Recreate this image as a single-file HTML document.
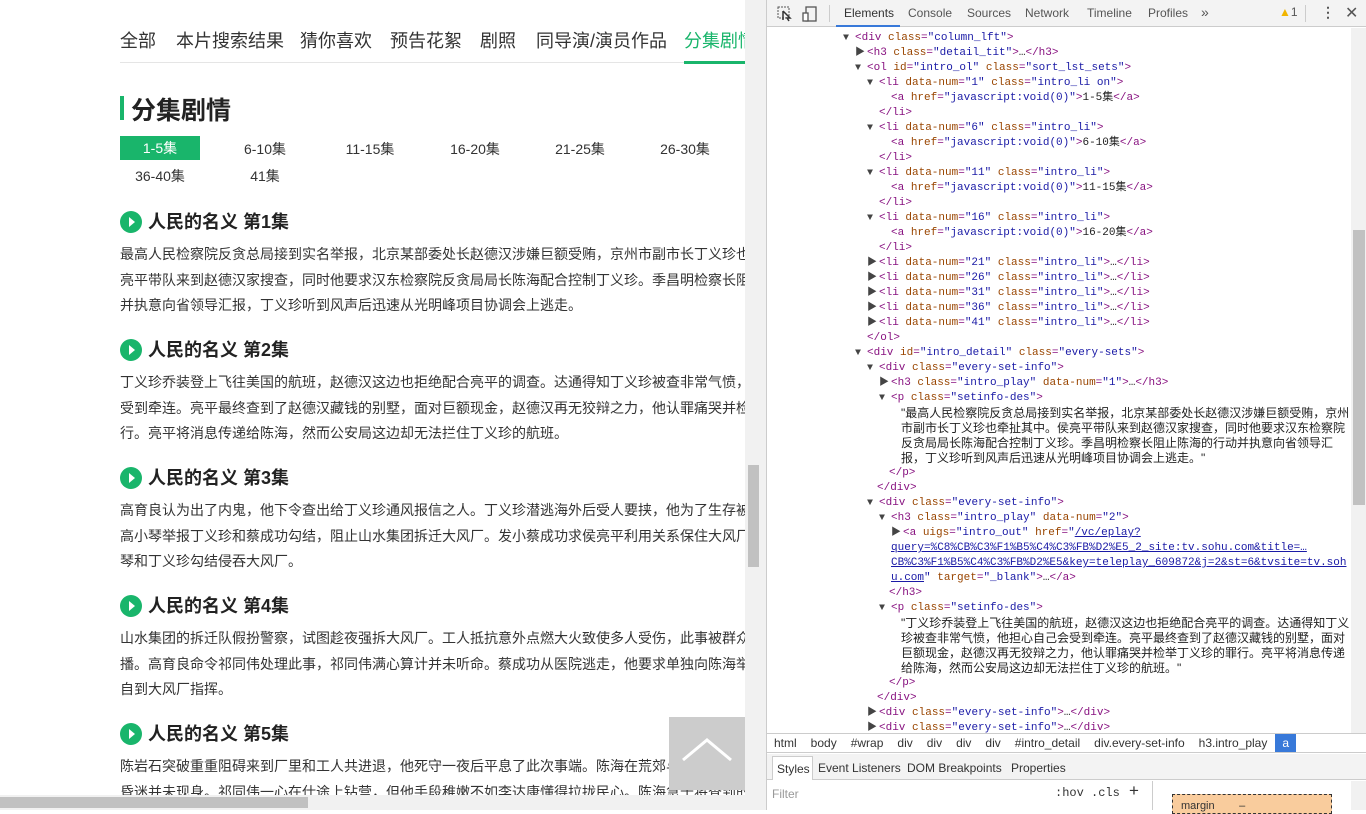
<!DOCTYPE html>
<html><head><meta charset="utf-8"><style>
*{margin:0;padding:0;box-sizing:border-box}
body{width:1366px;height:810px;overflow:hidden;background:#fff;font-family:"Liberation Sans","Noto Sans CJK SC",sans-serif;position:relative}
.a{position:absolute}
.nav span{position:absolute;top:27px;font-size:18px;color:#333;white-space:nowrap}
.ep{position:absolute;font-size:14px;color:#333;width:80px;text-align:center;height:24px;line-height:24px}
.h{position:absolute;left:120px;font-size:18px;font-weight:bold;color:#222;height:24px;line-height:24px;white-space:nowrap}
.h i{display:inline-block;width:22px;height:22px;border-radius:50%;background:#19b56b;vertical-align:-5px;margin-right:6px;position:relative}
.h i:after{content:"";position:absolute;left:9px;top:6px;border-left:6px solid #fff;border-top:5px solid transparent;border-bottom:5px solid transparent}
.p{position:absolute;left:120px;width:640px;font-size:14px;color:#333;line-height:25.5px;white-space:nowrap;overflow:hidden}
#dt{position:absolute;left:766px;top:0;width:600px;height:810px;background:#fff;border-left:1px solid #ccc;font-family:"Liberation Sans","Noto Sans CJK SC",sans-serif}
.code{position:absolute;left:0;top:31px;width:584px;font-family:"Liberation Mono","Noto Sans CJK SC",monospace;font-size:11px;line-height:15px;color:#222}
.code div{white-space:nowrap;height:15px;overflow:visible}
.t{color:#881280}.n{color:#994500}.v{color:#1a1aa6}.g{color:#a48}
.tri{color:#444;font-size:10px;display:inline-block;width:12px}
.cj{font-family:"Liberation Sans","Noto Sans CJK SC",sans-serif;font-size:12px;line-height:15px}
.u{color:#1a1aa6;text-decoration:underline}
</style></head><body>
<div class="nav">
<span style="left:120px">全部</span>
<span style="left:176px">本片搜索结果</span>
<span style="left:300px">猜你喜欢</span>
<span style="left:390px">预告花絮</span>
<span style="left:480px">剧照</span>
<span style="left:536px">同导演/演员作品</span>
<span style="left:684px;color:#19b56b">分集剧情</span>
</div>
<div class="a" style="left:120px;top:62px;width:625px;height:1px;background:#e5e5e5"></div>
<div class="a" style="left:684px;top:61px;width:61px;height:3px;background:#19b56b"></div>
<div class="a" style="left:120px;top:96px;width:4px;height:24px;background:#19b56b"></div>
<div class="a" style="left:131px;top:91px;font-size:25px;font-weight:bold;color:#222">分集剧情</div>
<div class="ep" style="left:120px;top:136px;background:#19b56b;color:#fff">1-5集</div>
<div class="ep" style="left:225px;top:137px">6-10集</div>
<div class="ep" style="left:330px;top:137px">11-15集</div>
<div class="ep" style="left:435px;top:137px">16-20集</div>
<div class="ep" style="left:540px;top:137px">21-25集</div>
<div class="ep" style="left:645px;top:137px">26-30集</div>
<div class="ep" style="left:120px;top:164px">36-40集</div>
<div class="ep" style="left:225px;top:164px">41集</div>

<div class="h" style="top:210px"><i></i>人民的名义 第1集</div>
<div class="p" style="top:242px;width:625px">最高人民检察院反贪总局接到实名举报，北京某部委处长赵德汉涉嫌巨额受贿，京州市副市长丁义珍也牵扯其中。<br>亮平带队来到赵德汉家搜查，同时他要求汉东检察院反贪局局长陈海配合控制丁义珍。季昌明检察长阻止陈海的行动<br>并执意向省领导汇报，丁义珍听到风声后迅速从光明峰项目协调会上逃走。</div>
<div class="h" style="top:338px"><i></i>人民的名义 第2集</div>
<div class="p" style="top:370px;width:625px">丁义珍乔装登上飞往美国的航班，赵德汉这边也拒绝配合亮平的调查。达通得知丁义珍被查非常气愤，他担心自己会<br>受到牵连。亮平最终查到了赵德汉藏钱的别墅，面对巨额现金，赵德汉再无狡辩之力，他认罪痛哭并检举丁义珍的罪<br>行。亮平将消息传递给陈海，然而公安局这边却无法拦住丁义珍的航班。</div>
<div class="h" style="top:466px"><i></i>人民的名义 第3集</div>
<div class="p" style="top:498px;width:625px">高育良认为出了内鬼，他下令查出给丁义珍通风报信之人。丁义珍潜逃海外后受人要挟，他为了生存被迫出卖情报。<br>高小琴举报丁义珍和蔡成功勾结，阻止山水集团拆迁大风厂。发小蔡成功求侯亮平利用关系保住大风厂，并举报高小<br>琴和丁义珍勾结侵吞大风厂。</div>
<div class="h" style="top:594px"><i></i>人民的名义 第4集</div>
<div class="p" style="top:626px;width:625px">山水集团的拆迁队假扮警察，试图趁夜强拆大风厂。工人抵抗意外点燃大火致使多人受伤，此事被群众拍下在网上传<br>播。高育良命令祁同伟处理此事，祁同伟满心算计并未听命。蔡成功从医院逃走，他要求单独向陈海举报，李达康亲<br>自到大风厂指挥。</div>
<div class="h" style="top:722px"><i></i>人民的名义 第5集</div>
<div class="p" style="top:754px;width:625px">陈岩石突破重重阻碍来到厂里和工人共进退，他死守一夜后平息了此次事端。陈海在荒郊与蔡成功接头，却遭遇车祸<br>昏迷并未现身。祁同伟一心在仕途上钻营，但他手段稚嫩不如李达康懂得拉拢民心。陈海急于将查到的</div>
<div class="a" style="left:669px;top:717px;width:76px;height:73px;background:#ccc"></div>
<svg class="a" style="left:677px;top:735px" width="60" height="30"><path d="M6 25 L30 5 L54 25" stroke="#fff" stroke-width="3" fill="none"/></svg>
<div class="a" style="left:745px;top:0;width:16px;height:795px;background:#f1f1f1"></div>
<div class="a" style="left:748px;top:465px;width:11px;height:102px;background:#c1c1c1"></div>
<div class="a" style="left:0;top:795px;width:761px;height:15px;background:#f1f1f1"></div>
<div class="a" style="left:0;top:797px;width:308px;height:11px;background:#c1c1c1"></div>
<div class="a" style="left:761px;top:0;width:5px;height:810px;background:#f1f1f1"></div>

<div id="dt">
<div class="a" style="left:0;top:0;width:600px;height:27px;background:#f3f3f3;border-bottom:1px solid #ccc"></div>
<svg class="a" style="left:10px;top:6px" width="44" height="16"><rect x="1" y="1" width="11" height="11" fill="none" stroke="#555" stroke-dasharray="2 1"/><path d="M6 5 L13 12 L10 12 L12 15 M6 5 L6 14" stroke="#333" stroke-width="1.5" fill="none"/><rect x="29" y="1" width="10" height="14" fill="none" stroke="#555" stroke-width="1.3"/><rect x="26" y="7" width="5" height="8" fill="#fff" stroke="#555" stroke-width="1.3"/></svg>
<div class="a" style="left:62px;top:5px;width:1px;height:17px;background:#ccc"></div>
<div class="a" style="top:6px;left:77px;font-size:12px;color:#333;white-space:nowrap">Elements</div>
<div class="a" style="left:69px;top:25px;width:64px;height:2px;background:#3879d9"></div>
<div class="a" style="top:6px;left:141px;font-size:12px;color:#555">Console</div>
<div class="a" style="top:6px;left:200px;font-size:12px;color:#555">Sources</div>
<div class="a" style="top:6px;left:258px;font-size:12px;color:#555">Network</div>
<div class="a" style="top:6px;left:320px;font-size:12px;color:#555">Timeline</div>
<div class="a" style="top:6px;left:381px;font-size:12px;color:#555">Profiles</div>
<div class="a" style="top:4px;left:434px;font-size:14px;color:#555">»</div>
<div class="a" style="top:5px;left:512px;font-size:12px;color:#555"><span style="color:#f1b500">▲</span>1</div>
<div class="a" style="left:538px;top:5px;width:1px;height:17px;background:#ccc"></div>
<div class="a" style="top:4px;left:554px;font-size:14px;color:#555;font-weight:bold">⋮</div>
<div class="a" style="top:3px;left:578px;font-size:16px;color:#555">✕</div>
<div class="a" style="left:584px;top:28px;width:16px;height:705px;background:#f1f1f1"></div>
<div class="a" style="left:586px;top:230px;width:12px;height:275px;background:#c1c1c1"></div>
<div class="code">
<div style="padding-left:76px"><span class="tri">▼</span><span class="t">&lt;div </span><span class="n">class</span><span class="t">=</span><span class="v">"column_lft"</span><span class="t">&gt;</span></div>
<div style="padding-left:88px"><span class="tri">▶</span><span class="t">&lt;h3 </span><span class="n">class</span><span class="t">=</span><span class="v">"detail_tit"</span><span class="t">&gt;</span>…<span class="t">&lt;/h3&gt;</span></div>
<div style="padding-left:88px"><span class="tri">▼</span><span class="t">&lt;ol </span><span class="n">id</span><span class="t">=</span><span class="v">"intro_ol"</span> <span class="n">class</span><span class="t">=</span><span class="v">"sort_lst_sets"</span><span class="t">&gt;</span></div>
<div style="padding-left:100px"><span class="tri">▼</span><span class="t">&lt;li </span><span class="n">data-num</span><span class="t">=</span><span class="v">"1"</span> <span class="n">class</span><span class="t">=</span><span class="v">"intro_li on"</span><span class="t">&gt;</span></div>
<div style="padding-left:124px"><span class="t">&lt;a </span><span class="n">href</span><span class="t">=</span><span class="v">"javascript:void(0)"</span><span class="t">&gt;</span>1-5集<span class="t">&lt;/a&gt;</span></div>
<div style="padding-left:112px"><span class="t">&lt;/li&gt;</span></div>
<div style="padding-left:100px"><span class="tri">▼</span><span class="t">&lt;li </span><span class="n">data-num</span><span class="t">=</span><span class="v">"6"</span> <span class="n">class</span><span class="t">=</span><span class="v">"intro_li"</span><span class="t">&gt;</span></div>
<div style="padding-left:124px"><span class="t">&lt;a </span><span class="n">href</span><span class="t">=</span><span class="v">"javascript:void(0)"</span><span class="t">&gt;</span>6-10集<span class="t">&lt;/a&gt;</span></div>
<div style="padding-left:112px"><span class="t">&lt;/li&gt;</span></div>
<div style="padding-left:100px"><span class="tri">▼</span><span class="t">&lt;li </span><span class="n">data-num</span><span class="t">=</span><span class="v">"11"</span> <span class="n">class</span><span class="t">=</span><span class="v">"intro_li"</span><span class="t">&gt;</span></div>
<div style="padding-left:124px"><span class="t">&lt;a </span><span class="n">href</span><span class="t">=</span><span class="v">"javascript:void(0)"</span><span class="t">&gt;</span>11-15集<span class="t">&lt;/a&gt;</span></div>
<div style="padding-left:112px"><span class="t">&lt;/li&gt;</span></div>
<div style="padding-left:100px"><span class="tri">▼</span><span class="t">&lt;li </span><span class="n">data-num</span><span class="t">=</span><span class="v">"16"</span> <span class="n">class</span><span class="t">=</span><span class="v">"intro_li"</span><span class="t">&gt;</span></div>
<div style="padding-left:124px"><span class="t">&lt;a </span><span class="n">href</span><span class="t">=</span><span class="v">"javascript:void(0)"</span><span class="t">&gt;</span>16-20集<span class="t">&lt;/a&gt;</span></div>
<div style="padding-left:112px"><span class="t">&lt;/li&gt;</span></div>
<div style="padding-left:100px"><span class="tri">▶</span><span class="t">&lt;li </span><span class="n">data-num</span><span class="t">=</span><span class="v">"21"</span> <span class="n">class</span><span class="t">=</span><span class="v">"intro_li"</span><span class="t">&gt;</span>…<span class="t">&lt;/li&gt;</span></div>
<div style="padding-left:100px"><span class="tri">▶</span><span class="t">&lt;li </span><span class="n">data-num</span><span class="t">=</span><span class="v">"26"</span> <span class="n">class</span><span class="t">=</span><span class="v">"intro_li"</span><span class="t">&gt;</span>…<span class="t">&lt;/li&gt;</span></div>
<div style="padding-left:100px"><span class="tri">▶</span><span class="t">&lt;li </span><span class="n">data-num</span><span class="t">=</span><span class="v">"31"</span> <span class="n">class</span><span class="t">=</span><span class="v">"intro_li"</span><span class="t">&gt;</span>…<span class="t">&lt;/li&gt;</span></div>
<div style="padding-left:100px"><span class="tri">▶</span><span class="t">&lt;li </span><span class="n">data-num</span><span class="t">=</span><span class="v">"36"</span> <span class="n">class</span><span class="t">=</span><span class="v">"intro_li"</span><span class="t">&gt;</span>…<span class="t">&lt;/li&gt;</span></div>
<div style="padding-left:100px"><span class="tri">▶</span><span class="t">&lt;li </span><span class="n">data-num</span><span class="t">=</span><span class="v">"41"</span> <span class="n">class</span><span class="t">=</span><span class="v">"intro_li"</span><span class="t">&gt;</span>…<span class="t">&lt;/li&gt;</span></div>
<div style="padding-left:100px"><span class="t">&lt;/ol&gt;</span></div>
<div style="padding-left:88px"><span class="tri">▼</span><span class="t">&lt;div </span><span class="n">id</span><span class="t">=</span><span class="v">"intro_detail"</span> <span class="n">class</span><span class="t">=</span><span class="v">"every-sets"</span><span class="t">&gt;</span></div>
<div style="padding-left:100px"><span class="tri">▼</span><span class="t">&lt;div </span><span class="n">class</span><span class="t">=</span><span class="v">"every-set-info"</span><span class="t">&gt;</span></div>
<div style="padding-left:112px"><span class="tri">▶</span><span class="t">&lt;h3 </span><span class="n">class</span><span class="t">=</span><span class="v">"intro_play"</span> <span class="n">data-num</span><span class="t">=</span><span class="v">"1"</span><span class="t">&gt;</span>…<span class="t">&lt;/h3&gt;</span></div>
<div style="padding-left:112px"><span class="tri">▼</span><span class="t">&lt;p </span><span class="n">class</span><span class="t">=</span><span class="v">"setinfo-des"</span><span class="t">&gt;</span></div>
<div class="cj" style="padding-left:134px;height:60px;white-space:normal;width:584px">"最高人民检察院反贪总局接到实名举报，北京某部委处长赵德汉涉嫌巨额受贿，京州市副市长丁义珍也牵扯其中。侯亮平带队来到赵德汉家搜查，同时他要求汉东检察院反贪局局长陈海配合控制丁义珍。季昌明检察长阻止陈海的行动并执意向省领导汇报，丁义珍听到风声后迅速从光明峰项目协调会上逃走。"</div>
<div style="padding-left:122px"><span class="t">&lt;/p&gt;</span></div>
<div style="padding-left:110px"><span class="t">&lt;/div&gt;</span></div>
<div style="padding-left:100px"><span class="tri">▼</span><span class="t">&lt;div </span><span class="n">class</span><span class="t">=</span><span class="v">"every-set-info"</span><span class="t">&gt;</span></div>
<div style="padding-left:112px"><span class="tri">▼</span><span class="t">&lt;h3 </span><span class="n">class</span><span class="t">=</span><span class="v">"intro_play"</span> <span class="n">data-num</span><span class="t">=</span><span class="v">"2"</span><span class="t">&gt;</span></div>
<div style="padding-left:124px"><span class="tri">▶</span><span class="t">&lt;a </span><span class="n">uigs</span><span class="t">=</span><span class="v">"intro_out"</span> <span class="n">href</span><span class="t">=</span><span class="v">"</span><span class="u">/vc/eplay?</span></div>
<div style="padding-left:124px"><span class="u">query=%C8%CB%C3%F1%B5%C4%C3%FB%D2%E5_2_site:tv.sohu.com&amp;title=…</span></div>
<div style="padding-left:124px"><span class="u">CB%C3%F1%B5%C4%C3%FB%D2%E5&amp;key=teleplay_609872&amp;j=2&amp;st=6&amp;tvsite=tv.soh</span></div>
<div style="padding-left:124px"><span class="u">u.com</span><span class="v">"</span> <span class="n">target</span><span class="t">=</span><span class="v">"_blank"</span><span class="t">&gt;</span>…<span class="t">&lt;/a&gt;</span></div>
<div style="padding-left:122px"><span class="t">&lt;/h3&gt;</span></div>
<div style="padding-left:112px"><span class="tri">▼</span><span class="t">&lt;p </span><span class="n">class</span><span class="t">=</span><span class="v">"setinfo-des"</span><span class="t">&gt;</span></div>
<div class="cj" style="padding-left:134px;height:60px;white-space:normal;width:584px">"丁义珍乔装登上飞往美国的航班，赵德汉这边也拒绝配合亮平的调查。达通得知丁义珍被查非常气愤，他担心自己会受到牵连。亮平最终查到了赵德汉藏钱的别墅，面对巨额现金，赵德汉再无狡辩之力，他认罪痛哭并检举丁义珍的罪行。亮平将消息传递给陈海，然而公安局这边却无法拦住丁义珍的航班。"</div>
<div style="padding-left:122px"><span class="t">&lt;/p&gt;</span></div>
<div style="padding-left:110px"><span class="t">&lt;/div&gt;</span></div>
<div style="padding-left:100px"><span class="tri">▶</span><span class="t">&lt;div </span><span class="n">class</span><span class="t">=</span><span class="v">"every-set-info"</span><span class="t">&gt;</span>…<span class="t">&lt;/div&gt;</span></div>
<div style="padding-left:100px"><span class="tri">▶</span><span class="t">&lt;div </span><span class="n">class</span><span class="t">=</span><span class="v">"every-set-info"</span><span class="t">&gt;</span>…<span class="t">&lt;/div&gt;</span></div>
</div>
<div class="a" style="left:0;top:733px;width:600px;height:20px;background:#fff;border-top:1px solid #ccc;border-bottom:1px solid #ccc;font-size:12px;color:#333;white-space:nowrap;line-height:18px">
<span style="margin-left:7px">html</span><span style="margin-left:14px">body</span><span style="margin-left:14px">#wrap</span><span style="margin-left:14px">div</span><span style="margin-left:14px">div</span><span style="margin-left:14px">div</span><span style="margin-left:14px">div</span><span style="margin-left:14px">#intro_detail</span><span style="margin-left:14px">div.every-set-info</span><span style="margin-left:14px">h3.intro_play</span><span style="margin-left:8px;background:#3879d9;color:#fff;padding:0 7px;display:inline-block">a</span>
</div>
<div class="a" style="left:0;top:754px;width:600px;height:26px;background:#f3f3f3;border-bottom:1px solid #ccc"></div>
<div class="a" style="left:5px;top:756px;width:41px;height:24px;background:#fff;border:1px solid #ccc;border-bottom:none;font-size:12px;color:#333;padding:5px 0 0 4px">Styles</div>
<div class="a" style="top:761px;left:51px;font-size:12px;color:#333;white-space:nowrap">Event Listeners</div>
<div class="a" style="top:761px;left:140px;font-size:12px;color:#333;white-space:nowrap">DOM Breakpoints</div>
<div class="a" style="top:761px;left:244px;font-size:12px;color:#333">Properties</div>
<div class="a" style="top:787px;left:5px;font-size:12px;color:#999">Filter</div>
<div class="a" style="top:786px;left:288px;font-size:12px;color:#333;font-family:'Liberation Mono',monospace;white-space:nowrap">:hov .cls</div>
<div class="a" style="top:781px;left:362px;font-size:17px;color:#333">+</div>
<div class="a" style="left:385px;top:781px;width:1px;height:29px;background:#ccc"></div>
<div class="a" style="left:405px;top:794px;width:160px;height:20px;background:#f9cc9d;border:1px dashed #333;font-size:11px;padding:5px 0 0 8px;color:#333">margin&nbsp;&nbsp;&nbsp;&nbsp;&nbsp;&nbsp;&nbsp;&nbsp;–</div>
<div class="a" style="left:584px;top:781px;width:16px;height:29px;background:#f1f1f1"></div>
</div>
</body></html>
